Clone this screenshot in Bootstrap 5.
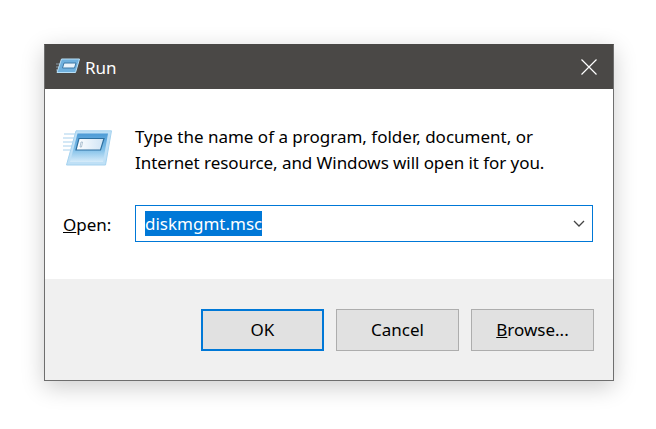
<!DOCTYPE html>
<html lang="en">
<head>
<meta charset="utf-8">
<title>Run</title>
<link rel="stylesheet" href="https://cdn.jsdelivr.net/npm/bootstrap@5.3.0/dist/css/bootstrap.min.css">
<style>
html,body{background:#fff;overflow:hidden}
body{font-family:"Noto Sans","Open Sans","Liberation Sans",sans-serif;font-size:17px;color:#000;padding:44px 0 0 44px;height:429px}
.run-win{width:570px;height:337px;border:1px solid #6e6e6e;border-top-color:#4a4846;background:#fff;box-shadow:0 6px 22px rgba(0,0,0,.2)}
.run-title{height:44px;background:#4a4846;color:#fff;padding-left:11px;padding-right:16px}
.run-title .ttl{margin-left:5px;padding-top:2px}
.run-main{height:190px;padding:0 20px 0 18px}
.run-top{padding-top:35px;height:116px}
.run-ico{margin-top:6px}
.run-msg{margin-left:18px;line-height:25.5px;white-space:nowrap}
.run-l2{letter-spacing:-.07px}
.run-open{height:37px}
.run-lbl{width:72px;padding-top:2px}
.run-input{width:458px;height:37px;border:1.5px solid #0078d7;padding:0 7px 0 9px}
.run-sel{background:#0078d7;color:#fff;display:inline-block;line-height:25px}
.run-foot{height:101px;background:#f0f0f0;padding:30px 19px 0 0;gap:12px}
.run-btn{width:123px;height:42px;border:1.5px solid #adadad;background:#e1e1e1;border-radius:0;color:#000;font-size:17px;padding:0;line-height:36px}
.run-btn.def{border:2px solid #0078d7}
</style>
</head>
<body>
<div class="run-win">
  <div class="run-title d-flex align-items-center">
    <svg width="24" height="18" viewBox="0 0 24 18">
      <path d="M0 6H5M0 9H4M0 12H3" stroke="#8a9aa6" stroke-width="1"/>
      <path d="M5.500 1H23.500L19.500 14.500H1Z" fill="#6fb0de" stroke="#b9e0f7"/>
      <path d="M8 5H20L18.500 10H6.500Z" fill="#e9f3fb" stroke="#3c78a6"/>
    </svg>
    <span class="ttl">Run</span>
    <svg class="ms-auto" width="16" height="16" viewBox="0 0 16 16"><path d="M.5.5 15.5 15.500M15.500.5.5 15.500" stroke="#fff" stroke-width="1.200" fill="none"/></svg>
  </div>
  <div class="run-main">
    <div class="run-top d-flex">
      <svg width="54" height="36" viewBox="0 0 54 36" class="run-ico flex-shrink-0">
        <defs>
          <linearGradient id="g" x1="0" y1="0" x2="0" y2="1"><stop offset="0" stop-color="#4d9bd6"/><stop offset=".55" stop-color="#7fbfe8"/><stop offset="1" stop-color="#d6ecfa"/></linearGradient>
          <linearGradient id="h" x1="0" y1="0" x2="1" y2="0"><stop offset="0" stop-color="#fff"/><stop offset="1" stop-color="#cfe4f5"/></linearGradient>
        </defs>
        <path d="M1 4H12M0 8H11M0 12H10M0 16H9M0 20H7" stroke="#c6e1f4" stroke-width="1.500"/>
        <path d="M13 .8H48.500L42.500 35H3.500Z" fill="#bfe0f6" stroke="#a5d2ef"/>
        <path d="M14.500 3.500H45L40 32H7Z" fill="url(#g)"/>
        <path d="M16 8.500H41L37.500 20H13Z" fill="url(#h)" stroke="#2d6f9f" stroke-width="1.200"/>
        <path d="M18 12H19.500L18.500 17H17Z" fill="#fff" stroke="#7f9fb8" stroke-width=".6"/>
      </svg>
      <div class="run-msg">Type the name of a program, folder, document, or<br><span class="run-l2">Internet resource, and Windows will open it for you.</span></div>
    </div>
    <div class="run-open d-flex align-items-center">
      <label class="run-lbl"><u>O</u>pen:</label>
      <div class="run-input d-flex align-items-center justify-content-between">
        <span class="run-sel">diskmgmt.msc</span>
        <svg width="12" height="7" viewBox="0 0 12 7"><path d="M1 1 6 6 11 1" stroke="#444" stroke-width="1.300" fill="none"/></svg>
      </div>
    </div>
  </div>
  <div class="run-foot d-flex justify-content-end">
    <button class="btn run-btn def">OK</button>
    <button class="btn run-btn">Cancel</button>
    <button class="btn run-btn"><u>B</u>rowse...</button>
  </div>
</div>
<script src="https://cdn.jsdelivr.net/npm/bootstrap@5.3.0/dist/js/bootstrap.bundle.min.js"></script>
</body>
</html>
